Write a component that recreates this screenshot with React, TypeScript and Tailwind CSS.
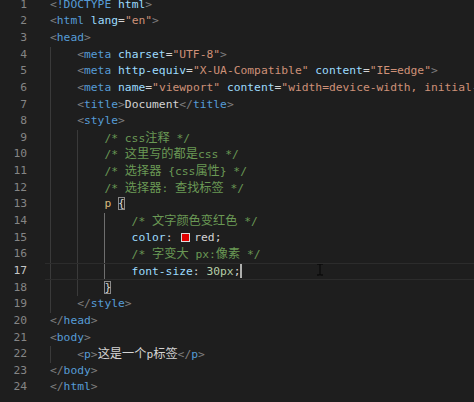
import React from "react";

const C = {
  pun: "text-[#808080]",
  tag: "text-[#569cd6]",
  att: "text-[#9cdcfe]",
  str: "text-[#ce9178]",
  txt: "text-[#d4d4d4]",
  com: "text-[#6a9955]",
  sel: "text-[#d7ba7d]",
  num: "text-[#b5cea8]",
};

type Kind = keyof typeof C | "swatch" | "open" | "close" | "caret";
type Tok = [string, Kind];
type Line = { indent: number; toks: Tok[] };

const open = (name: string): Tok[] => [["<", "pun"], [name, "tag"], [">", "pun"]];
const close = (name: string): Tok[] => [["</", "pun"], [name, "tag"], [">", "pun"]];

const lines: Line[] = [
  { indent: 0, toks: [["<", "pun"], ["!DOCTYPE", "tag"], [" ", "txt"], ["html", "att"], [">", "pun"]] },
  {
    indent: 0,
    toks: [["<", "pun"], ["html", "tag"], [" ", "txt"], ["lang", "att"], ["=", "txt"], ['"en"', "str"], [">", "pun"]],
  },
  { indent: 0, toks: open("head") },
  {
    indent: 1,
    toks: [["<", "pun"], ["meta", "tag"], [" ", "txt"], ["charset", "att"], ["=", "txt"], ['"UTF-8"', "str"], [">", "pun"]],
  },
  {
    indent: 1,
    toks: [
      ["<", "pun"], ["meta", "tag"], [" ", "txt"], ["http-equiv", "att"], ["=", "txt"], ['"X-UA-Compatible"', "str"],
      [" ", "txt"], ["content", "att"], ["=", "txt"], ['"IE=edge"', "str"], [">", "pun"],
    ],
  },
  {
    indent: 1,
    toks: [
      ["<", "pun"], ["meta", "tag"], [" ", "txt"], ["name", "att"], ["=", "txt"], ['"viewport"', "str"],
      [" ", "txt"], ["content", "att"], ["=", "txt"], ['"width=device-width, initial-scale=1.0"', "str"], [">", "pun"],
    ],
  },
  { indent: 1, toks: [...open("title"), ["Document", "txt"], ...close("title")] },
  { indent: 1, toks: open("style") },
  { indent: 2, toks: [["/* css注释 */", "com"]] },
  { indent: 2, toks: [["/* 这里写的都是css */", "com"]] },
  { indent: 2, toks: [["/* 选择器 {css属性} */", "com"]] },
  { indent: 2, toks: [["/* 选择器: 查找标签 */", "com"]] },
  { indent: 2, toks: [["p", "sel"], [" ", "txt"], ["{", "open"]] },
  { indent: 3, toks: [["/* 文字颜色变红色 */", "com"]] },
  { indent: 3, toks: [["color", "att"], [": ", "txt"], ["", "swatch"], ["red", "txt"], [";", "txt"]] },
  { indent: 3, toks: [["/* 字变大 px:像素 */", "com"]] },
  { indent: 3, toks: [["font-size", "att"], [": ", "txt"], ["30px", "num"], [";", "txt"], ["", "caret"]] },
  { indent: 2, toks: [["}", "close"]] },
  { indent: 1, toks: close("style") },
  { indent: 0, toks: close("head") },
  { indent: 0, toks: open("body") },
  { indent: 1, toks: [...open("p"), ["这是一个p标签", "txt"], ...close("p")] },
  { indent: 0, toks: close("body") },
  { indent: 0, toks: close("html") },
];

const ACTIVE = 17;

// CJK runs get a slightly larger size so they take the width they have in the editor
function Text({ text }: { text: string }) {
  const parts = text.split(/([\u3000-\u9fff\uff00-\uffef]+)/);
  return (
    <>
      {parts.map((p, i) =>
        /[\u3000-\u9fff\uff00-\uffef]/.test(p) ? (
          <span key={i} className="text-[12.2px]">
            {p}
          </span>
        ) : (
          p
        )
      )}
    </>
  );
}

function Token({ tok }: { tok: Tok }) {
  const [text, kind] = tok;
  if (kind === "swatch")
    return (
      <span className="inline-block w-[9px] h-[9px] ml-[2px] mr-[4px] border border-[#dcdcdc] bg-[#e00000] align-[-1px]" />
    );
  if (kind === "caret")
    return <span className="inline-block w-[2px] h-[15px] bg-[#aeafad] align-[-3px]" />;
  if (kind === "open" || kind === "close")
    return <span className="text-[#d4d4d4] shadow-[inset_0_0_0_1px_#8a8a8a]">{text}</span>;
  return (
    <span className={C[kind]}>
      <Text text={text} />
    </span>
  );
}

function IBeam() {
  return (
    <svg
      className="absolute left-[271px] top-[-1px]"
      width="8"
      height="13"
      viewBox="0 0 8 13"
      fill="none"
      stroke="#0b0b0b"
      strokeWidth="1.3"
    >
      <path d="M1 1h2l1 1 1-1h2M4 2v9M1 12h2l1-1 1 1h2" />
    </svg>
  );
}

function Row({ line, n }: { line: Line; n: number }) {
  const active = n === ACTIVE;
  const guides = [];
  for (let k = 0; k < line.indent; k++) {
    const bright = k === 2 && n >= 14 && n <= 17;
    guides.push(
      <span
        key={k}
        className={`inline-block w-[4ch] h-[16.65px] align-top border-l ${
          bright ? "border-[#6e6e6e]" : "border-[#3a3a3a]"
        }`}
      />
    );
  }
  return (
    <div className="flex h-[16.65px] leading-[16.65px]">
      <span className={`w-[27px] shrink-0 text-right ${active ? "text-[#c6c6c6]" : "text-[#858585]"}`}>{n}</span>
      <div
        className={`relative flex-1 ml-[18px] pl-[5px] whitespace-pre overflow-hidden ${
          active ? "border-y border-[#2c2c2c]" : ""
        }`}
      >
        <span className={active ? "relative top-[-1px]" : ""}>
          {guides}
          {line.toks.map((t, i) => (
            <Token key={i} tok={t} />
          ))}
        </span>
        {active && <IBeam />}
      </div>
    </div>
  );
}

export default function App() {
  return (
    <div className="w-[474px] h-[402px] overflow-hidden bg-[#1e1e1e] font-['DejaVu_Sans_Mono','Noto_Sans_CJK_SC',monospace] text-[11.3px]">
      <div className="-mt-[3.3px]">
        {lines.map((l, i) => (
          <Row key={i} line={l} n={i + 1} />
        ))}
      </div>
    </div>
  );
}
